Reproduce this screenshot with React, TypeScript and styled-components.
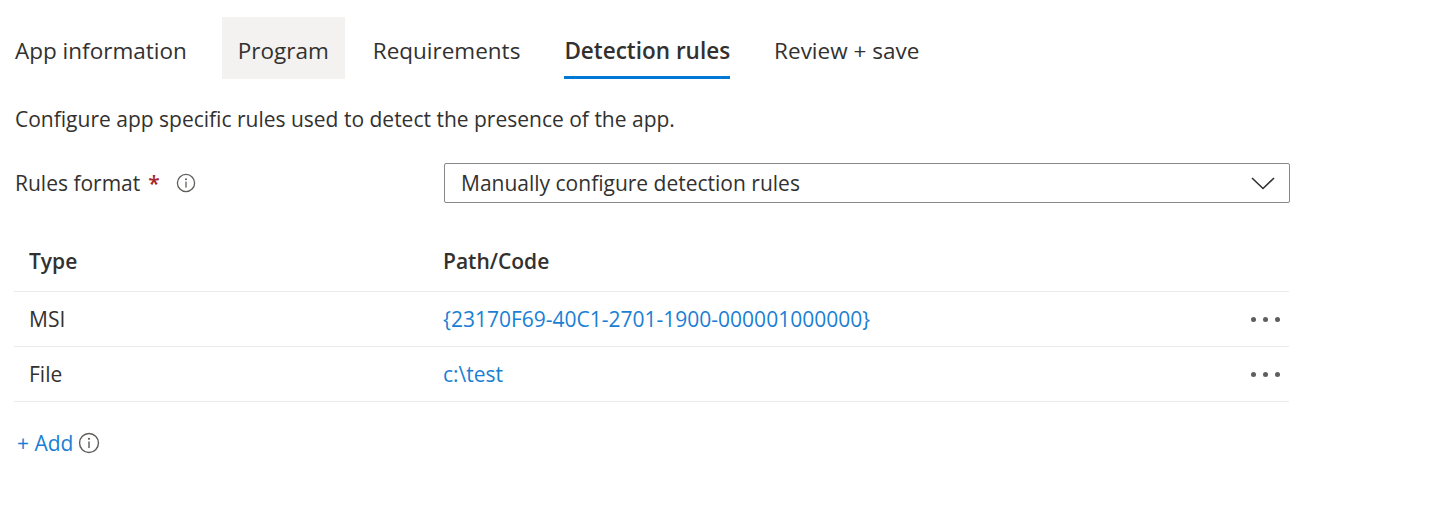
import styled, { createGlobalStyle } from 'styled-components';

const GlobalStyle = createGlobalStyle`
  html, body {
    margin: 0;
    padding: 0;
    background: #ffffff;
  }
  body {
    font-family: 'Open Sans', 'Noto Sans', sans-serif;
    color: #323130;
  }
`;

const Page = styled.div`
  width: 1290px;
  padding: 17px 0 0 15px;
  box-sizing: border-box;
`;

const TabBar = styled.div`
  display: flex;
  gap: 12px;
  height: 62px;
`;

const Tab = styled.div<{ $active?: boolean; $hover?: boolean }>`
  position: relative;
  display: flex;
  align-items: center;
  box-sizing: border-box;
  height: 62px;
  padding: 5px 16px 0;
  font-size: 22.5px;
  font-weight: ${p => (p.$active ? 600 : 400)};
  color: #323130;
  background: ${p => (p.$hover ? '#f3f2f1' : 'transparent')};
  white-space: nowrap;
  &:first-child {
    padding-left: 0;
    margin-right: 7px;
  }
  &::after {
    content: '';
    display: ${p => (p.$active ? 'block' : 'none')};
    position: absolute;
    left: 16px;
    right: 16px;
    bottom: 0;
    height: 3px;
    background: #0078d4;
  }
`;

const Description = styled.p`
  margin: 26px 0 0;
  font-size: 21px;
  line-height: 28px;
`;

const FieldRow = styled.div`
  display: grid;
  grid-template-columns: 429px 846px;
  align-items: center;
  margin-top: 30px;
`;

const Label = styled.div`
  display: flex;
  align-items: center;
  font-size: 21px;
`;

const Required = styled.span`
  color: #a4262c;
  margin-left: 8px;
  font-weight: 600;
`;

const InfoIcon = styled.svg<{ $gap: number }>`
  margin-left: ${p => p.$gap}px;
  flex-shrink: 0;
`;

const Dropdown = styled.div`
  display: flex;
  align-items: center;
  justify-content: space-between;
  height: 40px;
  box-sizing: border-box;
  border: 1px solid #8a8886;
  border-radius: 2px;
  padding: 0 14px 0 16px;
  font-size: 21px;
`;

const Table = styled.div`
  margin-top: 35px;
  width: 1275px;
  margin-left: -1px;
`;

const TableRow = styled.div<{ $header?: boolean }>`
  display: grid;
  grid-template-columns: 414px 1fr 60px;
  align-items: center;
  height: ${p => (p.$header ? '45px' : '54px')};
  padding-bottom: ${p => (p.$header ? '8px' : '0')};
  border-bottom: 1px solid #edebe9;
  font-size: 21px;
  font-weight: ${p => (p.$header ? 600 : 400)};
`;

const Cell = styled.div`
  padding-left: 15px;
  white-space: nowrap;
`;

const PathLink = styled.a`
  color: #1a7fd4;
  text-decoration: none;
`;

const More = styled.div`
  display: flex;
  justify-content: flex-end;
  padding-right: 9px;
  gap: 7px;
`;

const Dot = styled.span`
  width: 5px;
  height: 5px;
  border-radius: 50%;
  background: #605e5c;
`;

const AddButton = styled.div`
  display: flex;
  align-items: center;
  margin-top: 27px;
  margin-left: 2px;
  font-size: 21px;
  color: #1a7fd4;
`;

const Info = ({ size = 20, gap = 16 }: { size?: number; gap?: number }) => (
  <InfoIcon $gap={gap} width={size} height={size} viewBox="0 0 20 20">
    <circle cx="10" cy="10" r="8.6" fill="none" stroke="#605e5c" strokeWidth="1.3" />
    <circle cx="10" cy="6.2" r="1" fill="#605e5c" />
    <rect x="9.35" y="8.6" width="1.3" height="6" fill="#605e5c" />
  </InfoIcon>
);

const Chevron = () => (
  <svg width="24" height="13" viewBox="0 0 24 13">
    <path d="M1 1 L12 11.5 L23 1" fill="none" stroke="#323130" strokeWidth="1.6" />
  </svg>
);

const MoreDots = () => (
  <More>
    <Dot />
    <Dot />
    <Dot />
  </More>
);

const rules = [
  { type: 'MSI', path: '{23170F69-40C1-2701-1900-000001000000}' },
  { type: 'File', path: 'c:\\test' },
];

const tabs = ['App information', 'Program', 'Requirements', 'Detection rules', 'Review + save'];

const App = () => (
  <>
    <GlobalStyle />
    <Page>
      <TabBar>
        {tabs.map(t => (
          <Tab key={t} $active={t === 'Detection rules'} $hover={t === 'Program'}>
            {t}
          </Tab>
        ))}
      </TabBar>
      <Description>Configure app specific rules used to detect the presence of the app.</Description>
      <FieldRow>
        <Label>
          Rules format<Required>*</Required>
          <Info />
        </Label>
        <Dropdown>
          Manually configure detection rules
          <Chevron />
        </Dropdown>
      </FieldRow>
      <Table>
        <TableRow $header>
          <Cell>Type</Cell>
          <Cell>Path/Code</Cell>
          <div />
        </TableRow>
        {rules.map(r => (
          <TableRow key={r.type}>
            <Cell>{r.type}</Cell>
            <Cell>
              <PathLink href="#">{r.path}</PathLink>
            </Cell>
            <MoreDots />
          </TableRow>
        ))}
      </Table>
      <AddButton>
        + Add
        <Info size={22} gap={5} />
      </AddButton>
    </Page>
  </>
);

export default App;
